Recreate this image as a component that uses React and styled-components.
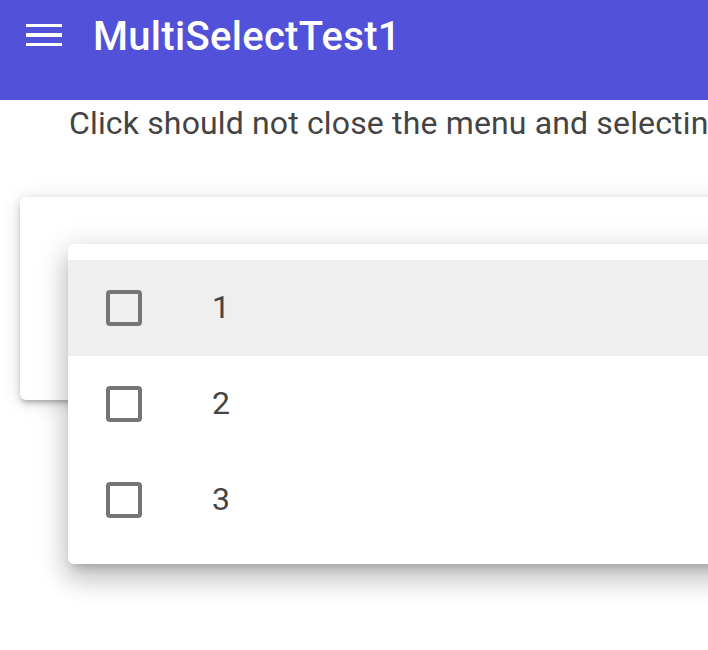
import React from "react";
import styled, { createGlobalStyle } from "styled-components";

const Global = createGlobalStyle`
  html, body { margin: 0; padding: 0; background: #fff; overflow: hidden; }
  body { font-family: Roboto, "Noto Sans", sans-serif; width: 708px; height: 650px; }
`;

const Page = styled.div`
  width: 708px;
  height: 650px;
  overflow: hidden;
  position: relative;
`;

const AppBar = styled.header`
  height: 100px;
  background: #5251d9;
  display: flex;
  align-items: flex-start;
  padding: 0 0 0 26px;
  box-sizing: border-box;
`;

const MenuButton = styled.div`
  width: 36px;
  height: 36px;
  margin-top: 17px;
  display: flex;
  flex-direction: column;
  justify-content: center;
  gap: 6px;
`;

const Bar = styled.span`
  display: block;
  height: 3.5px;
  background: #fff;
`;

const Title = styled.h1`
  margin: 0 0 0 31px;
  padding-top: 13px;
  color: #fff;
  font-size: 40px;
  font-weight: 500;
  line-height: 48px;
  letter-spacing: 0.3px;
`;

const Hint = styled.p`
  margin: 0;
  padding: 5px 0 0 69px;
  font-size: 32px;
  line-height: 36px;
  color: #444;
  white-space: nowrap;
  letter-spacing: 0.15px;
`;

const Card = styled.div`
  margin: 56px 0 0 20px;
  width: 760px;
  height: 203px;
  background: #fff;
  border-radius: 6px;
  box-shadow: 0 4px 4px -2px rgba(0,0,0,0.2), 0 3px 8px 0 rgba(0,0,0,0.14), 0 2px 20px 0 rgba(0,0,0,0.12);
`;

const Menu = styled.ul`
  position: absolute;
  left: 68px;
  top: 244px;
  width: 720px;
  margin: 0;
  padding: 16px 0;
  list-style: none;
  background: #fff;
  border-radius: 6px;
  box-shadow: 0 8px 10px -5px rgba(0,0,0,0.2), 0 16px 24px 2px rgba(0,0,0,0.14), 0 6px 30px 5px rgba(0,0,0,0.12);
`;

const Item = styled.li`
  height: 96px;
  display: flex;
  align-items: center;
  padding-left: 38px;
  background: ${(p) => (p.$active ? "#efefef" : "transparent")};
`;

const Box = styled.span`
  flex: none;
  width: 28px;
  height: 28px;
  border: 4px solid #757575;
  border-radius: 4px;
`;

const Label = styled.span`
  margin-left: 70px;
  margin-top: -3px;
  font-size: 32px;
  color: #444;
`;

const items = ["1", "2", "3"];

export default function App() {
  return (
    <Page>
      <Global />
      <AppBar>
        <MenuButton>
          <Bar />
          <Bar />
          <Bar />
        </MenuButton>
        <Title>MultiSelectTest1</Title>
      </AppBar>
      <Hint>Click should not close the menu and selecting items should work</Hint>
      <Card />
      <Menu>
        {items.map((it, i) => (
          <Item key={it} $active={i === 0}>
            <Box />
            <Label>{it}</Label>
          </Item>
        ))}
      </Menu>
    </Page>
  );
}
